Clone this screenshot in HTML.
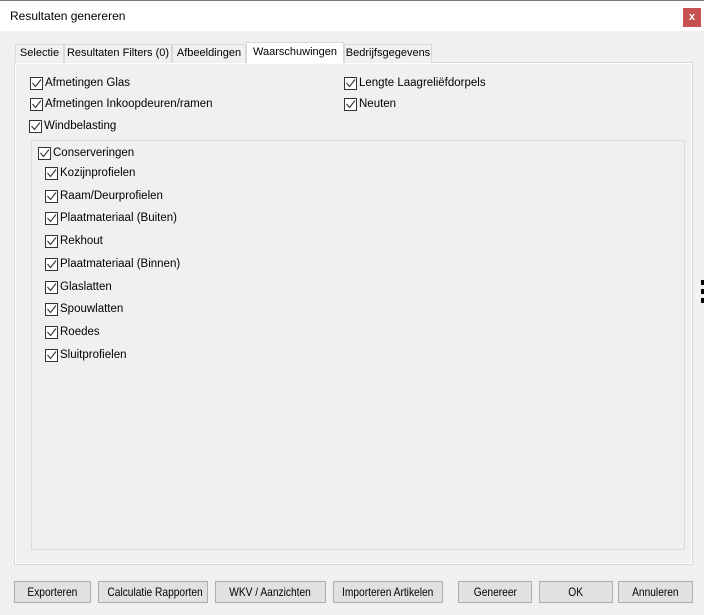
<!DOCTYPE html>
<html><head><style>
*{margin:0;padding:0;box-sizing:border-box}
body{width:704px;height:615px;background:#f0f0f0;font-family:"Liberation Sans",sans-serif;font-size:11.5px;color:#000;position:relative;overflow:hidden}
.a{position:absolute;white-space:nowrap}
.title{left:0;top:0;width:704px;height:31px;background:#fff;border-top:1px solid #777}
.close{left:683px;top:8px;width:18px;height:19px;background:#c75050;color:#fff;font-weight:bold;font-size:11px;text-align:center;line-height:18px}
.tab{top:44px;height:19px;border:1px solid #d9d9d9;border-bottom:none;background:#f0f0f0;line-height:17px;text-align:center;font-size:11px}
.cb{width:13px;height:13px;border:1px solid #333;background:#fff}
.cb svg{position:absolute;left:0;top:0}
.btn{top:581px;height:22px;border:1px solid #adadad;background:#e1e1e1;text-align:center;line-height:20px;font-size:12px}
.btn span{display:inline-block;transform:scaleX(.85);white-space:nowrap}
</style></head><body>
<div class="a title"></div>
<div class="a" style="left:10px;top:9px;font-size:12px">Resultaten genereren</div>
<div class="a close">x</div>
<div class="a" style="left:14px;top:62px;width:679px;height:503px;border:1px solid #d9d9d9;background:#fff"></div>
<div class="a" style="left:16px;top:64px;width:675px;height:499px;background:#f0f0f0"></div>
<div class="a tab" style="left:15px;width:49px">Selectie</div>
<div class="a tab" style="left:64px;width:108px">Resultaten Filters (0)</div>
<div class="a tab" style="left:172px;width:74px">Afbeeldingen</div>
<div class="a tab" style="left:246px;top:42px;height:21px;width:98px;background:#fff;z-index:2;line-height:19px">Waarschuwingen</div>
<div class="a tab" style="left:344px;width:88px">Bedrijfsgegevens</div>
<div class="a" style="left:31px;top:140px;width:654px;height:410px;border:1px solid #dcdcdc"></div>
<div id="c"></div>
<div class="a btn" style="left:14px;width:77px"><span>Exporteren</span></div>
<div class="a btn" style="left:98px;width:110px"><span>Calculatie Rapporten</span></div>
<div class="a btn" style="left:215px;width:111px"><span>WKV / Aanzichten</span></div>
<div class="a btn" style="left:333px;width:110px"><span>Importeren Artikelen</span></div>
<div class="a btn" style="left:458px;width:74px"><span>Genereer</span></div>
<div class="a btn" style="left:539px;width:74px"><span>OK</span></div>
<div class="a btn" style="left:618px;width:75px"><span>Annuleren</span></div>
<div class="a" style="left:701px;top:280px;width:3px;height:5px;background:#000"></div>
<div class="a" style="left:701px;top:289px;width:3px;height:5px;background:#000"></div>
<div class="a" style="left:701px;top:298px;width:3px;height:5px;background:#000"></div>
<script>
var items=[[30,77,"Afmetingen Glas"],[30,98,"Afmetingen Inkoopdeuren/ramen"],[29,120,"Windbelasting"],[344,77,"Lengte Laagreliëfdorpels"],[344,98,"Neuten"],[38,147,"Conserveringen"]];
var sub=["Kozijnprofielen","Raam/Deurprofielen","Plaatmateriaal (Buiten)","Rekhout","Plaatmateriaal (Binnen)","Glaslatten","Spouwlatten","Roedes","Sluitprofielen"];
sub.forEach(function(s,i){items.push([45,Math.round(167+i*22.7),s])});
var h="";
items.forEach(function(t){
h+='<div class="a cb" style="left:'+t[0]+'px;top:'+t[1]+'px"><svg width="11" height="11"><path d="M1.5 5 L4.5 8.5 L10 1.5" stroke="#333" stroke-width="1.1" fill="none"/></svg></div>';
h+='<div class="a" style="left:'+(t[0]+15)+'px;top:'+(t[1]+0)+'px">'+t[2]+'</div>';
});
document.getElementById("c").innerHTML=h;
</script>
</body></html>
